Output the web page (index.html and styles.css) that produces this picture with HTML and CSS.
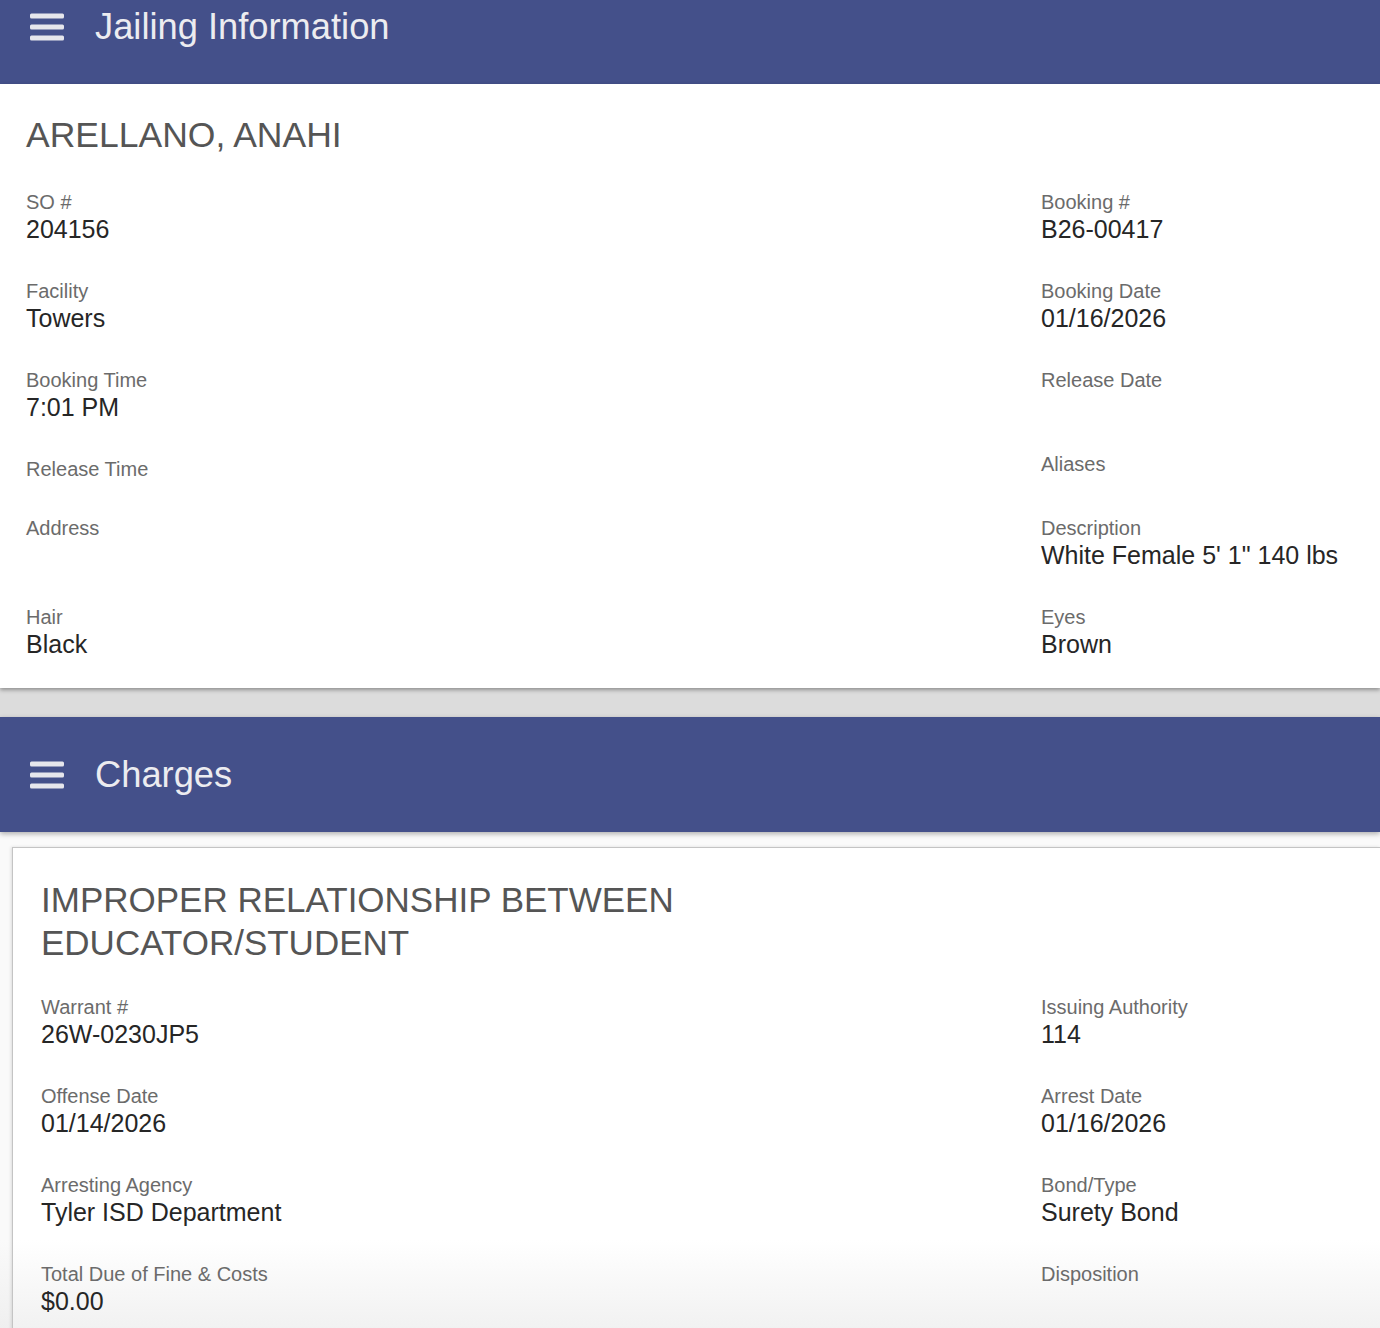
FILE: index.html
```html
<!DOCTYPE html>
<html lang="en">
<head>
  <meta charset="UTF-8">
  <meta name="viewport" content="width=device-width, initial-scale=1.0">
  <title>Jailing Information</title>
  <link rel="stylesheet" href="styles.css">
</head>
<body>
  <header class="bar bar-first">
    <svg class="menu-icon" width="34" height="28" viewBox="0 0 34 28" aria-hidden="true">
      <rect x="0" y="0.5" width="34" height="5" rx="1.5"/>
      <rect x="0" y="11.5" width="34" height="5" rx="1.5"/>
      <rect x="0" y="22.5" width="34" height="5" rx="1.5"/>
    </svg>
    <h1>Jailing Information</h1>
  </header>

  <section class="card person">
    <h2 class="name">ARELLANO, ANAHI</h2>
    <div class="fields">
      <div class="field">
        <div class="label">SO #</div>
        <div class="value">204156</div>
      </div>
      <div class="field">
        <div class="label">Booking #</div>
        <div class="value">B26-00417</div>
      </div>
      <div class="field">
        <div class="label">Facility</div>
        <div class="value">Towers</div>
      </div>
      <div class="field">
        <div class="label">Booking Date</div>
        <div class="value">01/16/2026</div>
      </div>
      <div class="field">
        <div class="label">Booking Time</div>
        <div class="value">7:01 PM</div>
      </div>
      <div class="field">
        <div class="label">Release Date</div>
        <div class="value"></div>
      </div>
      <div class="field">
        <div class="label">Release Time</div>
        <div class="value"></div>
      </div>
      <div class="field field-raised">
        <div class="label">Aliases</div>
        <div class="value"></div>
      </div>
      <div class="field">
        <div class="label">Address</div>
        <div class="value"></div>
      </div>
      <div class="field">
        <div class="label">Description</div>
        <div class="value">White Female 5' 1" 140 lbs</div>
      </div>
      <div class="field">
        <div class="label">Hair</div>
        <div class="value">Black</div>
      </div>
      <div class="field">
        <div class="label">Eyes</div>
        <div class="value">Brown</div>
      </div>
    </div>
  </section>

  <header class="bar">
    <svg class="menu-icon" width="34" height="28" viewBox="0 0 34 28" aria-hidden="true">
      <rect x="0" y="0.5" width="34" height="5" rx="1.5"/>
      <rect x="0" y="11.5" width="34" height="5" rx="1.5"/>
      <rect x="0" y="22.5" width="34" height="5" rx="1.5"/>
    </svg>
    <h1>Charges</h1>
  </header>

  <div class="charges">
    <section class="card charge">
      <h2 class="charge-title">IMPROPER RELATIONSHIP BETWEEN EDUCATOR/STUDENT</h2>
      <div class="fields">
        <div class="field">
          <div class="label">Warrant #</div>
          <div class="value">26W-0230JP5</div>
        </div>
        <div class="field">
          <div class="label">Issuing Authority</div>
          <div class="value">114</div>
        </div>
        <div class="field">
          <div class="label">Offense Date</div>
          <div class="value">01/14/2026</div>
        </div>
        <div class="field">
          <div class="label">Arrest Date</div>
          <div class="value">01/16/2026</div>
        </div>
        <div class="field">
          <div class="label">Arresting Agency</div>
          <div class="value">Tyler ISD Department</div>
        </div>
        <div class="field">
          <div class="label">Bond/Type</div>
          <div class="value">Surety Bond</div>
        </div>
        <div class="field">
          <div class="label">Total Due of Fine &amp; Costs</div>
          <div class="value">$0.00</div>
        </div>
        <div class="field">
          <div class="label">Disposition</div>
          <div class="value"></div>
        </div>
      </div>
    </section>
  </div>
</body>
</html>
```

FILE: styles.css
```css
html {
  background: #dcdcdc;
}

body {
  margin: 0;
  font-family: "Liberation Sans", Arial, sans-serif;
  overflow-x: hidden;
}

.bar {
  position: relative;
  z-index: 1;
  height: 115px;
  display: flex;
  align-items: center;
  gap: 31px;
  padding-left: 30px;
  background-color: #44508a;
  color: #ececf0;
  box-shadow: 0 2px 5px rgba(0, 0, 0, 0.3);
}

.bar-first {
  margin-top: -31px;
}

.bar h1 {
  margin: 0;
  font-size: 36.3px;
  font-weight: normal;
  line-height: 1.2;
}

.menu-icon {
  flex: none;
  fill: #e6e6ec;
}

.card {
  background-color: #fff;
}

.person {
  position: relative;
  z-index: 2;
  padding: 30px 26px 29px;
  margin-bottom: 29px;
  box-shadow: 0 2px 4px rgba(0, 0, 0, 0.35);
}

.name {
  margin: 0 0 34px;
  font-size: 35.5px;
  font-weight: normal;
  line-height: 42px;
  color: #555;
}

.fields {
  display: grid;
  grid-template-columns: 1fr 313px;
  row-gap: 35px;
}

.label {
  font-size: 20px;
  line-height: 24px;
  color: #6b6b6b;
}

.value {
  padding-top: 1px;
  font-size: 25px;
  line-height: 29px;
  color: #262626;
}

.value:empty {
  padding-top: 0;
}

.field-raised {
  margin-top: -5px;
}

.charges {
  padding: 15px 0 0 12px;
  background: linear-gradient(to bottom, #fafafa, #fafafa calc(100% - 90px), #efefef);
}

.charge {
  padding: 30px 0 14px 28px;
  border: 1px solid #c4c4c4;
  border-right: none;
  border-bottom: none;
  box-shadow: -1px 0 3px rgba(0, 0, 0, 0.12);
  background: linear-gradient(to bottom, #fff, #fff calc(100% - 90px), #f1f1f1);
}

.charge .fields {
  grid-template-columns: 1000px 1fr;
}

.charge-title {
  max-width: 900px;
  margin: 0 0 31px;
  font-size: 35px;
  font-weight: normal;
  line-height: 43px;
  color: #555;
}
```
